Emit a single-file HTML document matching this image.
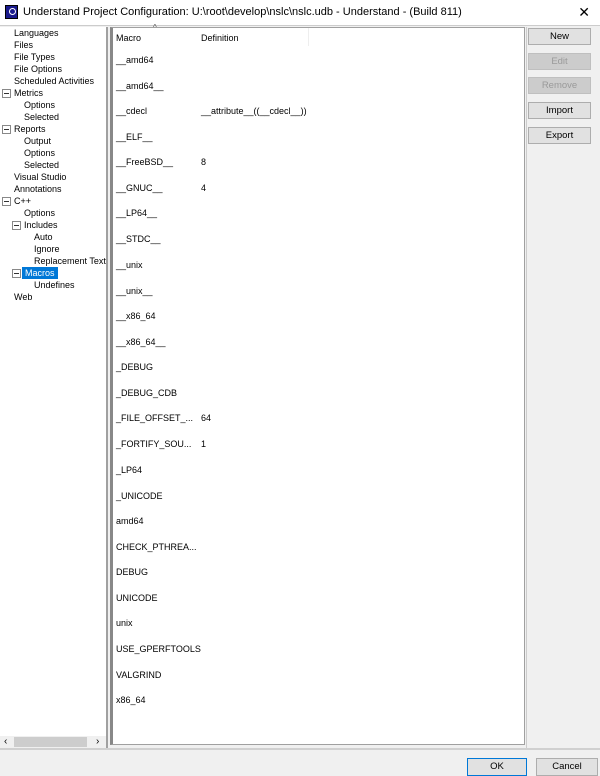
<!DOCTYPE html>
<html><head><meta charset="utf-8"><style>
*{margin:0;padding:0;box-sizing:border-box}
body{width:600px;height:775px;background:#f0f0f0;font-family:"Liberation Sans",sans-serif;font-size:9px;color:#000;position:relative;overflow:hidden}
.title{position:absolute;left:0;top:0;width:600px;height:26px;background:#fff;border-bottom:1px solid #ccc}
.title .t{position:absolute;left:23px;top:6px;font-size:11px;font-family:"Liberation Sans",sans-serif}
.title .x{position:absolute;right:10px;top:4px;font-size:14px;font-weight:300}
.icon{position:absolute;left:5px;top:5px;width:13px;height:14px;background:#1a1a8c;border:1px solid #000}
.icon:after{content:"";position:absolute;left:3px;top:2px;width:5px;height:5px;border:1.5px solid #fff;border-radius:50%}
.tree{position:absolute;left:0;top:27px;width:108px;height:722px;background:#fff;border-right:2px solid #a0a0a0;border-bottom:2px solid #a0a0a0;overflow:hidden}
.tree div{position:absolute;white-space:nowrap;line-height:12px}
.pm{position:absolute;width:9px;height:9px;border:1px solid #888;background:#fff}
.pm:after{content:"";position:absolute;left:1px;top:3px;width:5px;height:1px;background:#333}
.sel{background:#0078d7;color:#fff;padding:0 3px}
.sb{position:absolute;left:0;top:736px;width:106px;height:12px;background:#f0f0f0}
.list{position:absolute;left:110px;top:27px;width:415px;height:718px;background:#fff;border:1px solid #a0a0a0;border-left:3px solid #888}
.list div{position:absolute;white-space:nowrap}
.right{position:absolute;left:526px;top:27px;width:74px;height:722px;background:#f0f0f0;border-left:1px solid #ccc}
.btn{position:absolute;left:528px;width:63px;height:17px;background:#e1e1e1;border:1px solid #adadad;text-align:center;line-height:15px;font-size:9.5px}
.dis{color:#9a9a9a;background:#ccc;border-color:#bfbfbf}
.hline{position:absolute;left:0;top:748px;width:600px;height:2px;background:#d0d0d0}
</style></head><body>
<div class="title"><div class="icon"></div><div class="t">Understand Project Configuration: U:\root\develop\nslc\nslc.udb - Understand - (Build 811)</div><div class="x">✕</div></div>
<div class="tree">
<div style="left:14px;top:0">Languages</div>
<div style="left:14px;top:12px">Files</div>
<div style="left:14px;top:24px">File Types</div>
<div style="left:14px;top:36px">File Options</div>
<div style="left:14px;top:48px">Scheduled Activities</div>
<span class="pm" style="left:2px;top:62px"></span><div style="left:14px;top:60px">Metrics</div>
<div style="left:24px;top:72px">Options</div>
<div style="left:24px;top:84px">Selected</div>
<span class="pm" style="left:2px;top:98px"></span><div style="left:14px;top:96px">Reports</div>
<div style="left:24px;top:108px">Output</div>
<div style="left:24px;top:120px">Options</div>
<div style="left:24px;top:132px">Selected</div>
<div style="left:14px;top:144px">Visual Studio</div>
<div style="left:14px;top:156px">Annotations</div>
<span class="pm" style="left:2px;top:170px"></span><div style="left:14px;top:168px">C++</div>
<div style="left:24px;top:180px">Options</div>
<span class="pm" style="left:12px;top:194px"></span><div style="left:24px;top:192px">Includes</div>
<div style="left:34px;top:204px">Auto</div>
<div style="left:34px;top:216px">Ignore</div>
<div style="left:34px;top:228px">Replacement Text</div>
<span class="pm" style="left:12px;top:242px"></span><div class="sel" style="left:22px;top:240px">Macros</div>
<div style="left:34px;top:252px">Undefines</div>
<div style="left:14px;top:264px">Web</div>
</div>
<div class="sb"><span style="position:absolute;left:4px;top:0;font-size:10px">‹</span><div style="position:absolute;left:14px;top:1px;width:73px;height:10px;background:#cdcdcd"></div><span style="position:absolute;left:96px;top:0;font-size:10px">›</span></div>
<div class="list">
<div style="left:195px;top:0;width:1px;height:18px;background:#eee"></div>
<div style="left:40px;top:-5px;font-size:8px;color:#555">^</div>
<div style="left:3px;top:5px">Macro</div><div style="left:88px;top:5px">Definition</div>
<div style="left:3px;top:27px">__amd64</div>
<div style="left:3px;top:53px">__amd64__</div>
<div style="left:3px;top:78px">__cdecl</div><div style="left:88px;top:78px">__attribute__((__cdecl__))</div>
<div style="left:3px;top:104px">__ELF__</div>
<div style="left:3px;top:129px">__FreeBSD__</div><div style="left:88px;top:129px">8</div>
<div style="left:3px;top:155px">__GNUC__</div><div style="left:88px;top:155px">4</div>
<div style="left:3px;top:180px">__LP64__</div>
<div style="left:3px;top:206px">__STDC__</div>
<div style="left:3px;top:232px">__unix</div>
<div style="left:3px;top:258px">__unix__</div>
<div style="left:3px;top:283px">__x86_64</div>
<div style="left:3px;top:309px">__x86_64__</div>
<div style="left:3px;top:334px">_DEBUG</div>
<div style="left:3px;top:360px">_DEBUG_CDB</div>
<div style="left:3px;top:385px">_FILE_OFFSET_...</div><div style="left:88px;top:385px">64</div>
<div style="left:3px;top:411px">_FORTIFY_SOU...</div><div style="left:88px;top:411px">1</div>
<div style="left:3px;top:437px">_LP64</div>
<div style="left:3px;top:463px">_UNICODE</div>
<div style="left:3px;top:488px">amd64</div>
<div style="left:3px;top:514px">CHECK_PTHREA...</div>
<div style="left:3px;top:539px">DEBUG</div>
<div style="left:3px;top:565px">UNICODE</div>
<div style="left:3px;top:590px">unix</div>
<div style="left:3px;top:616px">USE_GPERFTOOLS</div>
<div style="left:3px;top:642px">VALGRIND</div>
<div style="left:3px;top:667px">x86_64</div>
</div>
<div class="right"></div>
<div class="btn" style="top:28px">New</div>
<div class="btn dis" style="top:53px">Edit</div>
<div class="btn dis" style="top:77px">Remove</div>
<div class="btn" style="top:102px">Import</div>
<div class="btn" style="top:127px">Export</div>
<div class="hline"></div>
<div class="btn" style="left:467px;top:758px;width:60px;height:18px;border:1px solid #0078d7">OK</div>
<div class="btn" style="left:536px;top:758px;width:62px;height:18px">Cancel</div>
</body></html>
